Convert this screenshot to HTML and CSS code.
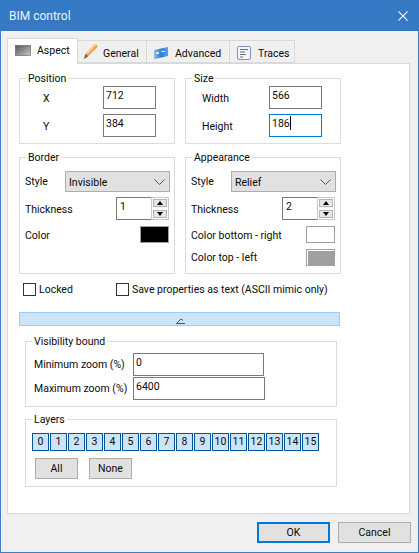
FILE: index.html
```html
<!DOCTYPE html>
<html lang="en">
<head>
<meta charset="utf-8">
<title>BIM control</title>
<link rel="stylesheet" href="styles.css">
</head>
<body>
<div class="window">
  <header class="titlebar">
    <span class="title">BIM control</span>
    <svg class="close" width="10" height="10" viewBox="0 0 10 10"><path d="M.4.4l9.200 9.200M9.600.4L.4 9.600" stroke="#fff" stroke-width="1.100" fill="none"/></svg>
  </header>
  <div class="tabs">
    <div class="tab tab-active tab-aspect">
      <svg width="16" height="12" viewBox="0 0 16 12"><defs><linearGradient id="g1" x1="0" y1="0" x2="1" y2="1"><stop offset="0" stop-color="#555"/><stop offset="1" stop-color="#c8c8c8"/></linearGradient></defs><rect x=".5" y=".5" width="15" height="10" fill="url(#g1)" stroke="#555" stroke-width=".6"/></svg>
      <span>Aspect</span>
    </div>
    <div class="tab tab-general">
      <svg width="16" height="17" viewBox="0 0 16 17"><path d="M1 16l1.500-5L11 1.500c1.500-1 3.500 .5 3.500 2.500L5.500 13z" fill="#f0a040"/><path d="M3 10.500L11 1.500c1-.7 2-.3 2.500 .3L5 11z" fill="#fbd08a"/><path d="M1 16l1.500-5 2.500 2.200z" fill="#6a5a48"/></svg>
      <span>General</span>
    </div>
    <div class="tab tab-advanced">
      <svg width="15" height="12" viewBox="0 0 15 12"><defs><linearGradient id="g2" x1="0" y1="0" x2="1" y2="0"><stop offset="0" stop-color="#8cc0ec"/><stop offset=".5" stop-color="#2f7fd0"/><stop offset="1" stop-color="#5aa0e0"/></linearGradient></defs><path d="M0 3l14-3v9L1 12H0z" fill="url(#g2)"/><path d="M2 5h3v2H2zM7 4h4v1H7z" fill="#cfe6fa"/></svg>
      <span>Advanced</span>
    </div>
    <div class="tab tab-traces">
      <svg width="14" height="14" viewBox="0 0 14 14"><rect x=".5" y=".5" width="13" height="13" rx="1.500" fill="#f2f5fb" stroke="#7f93c0"/><path d="M3 3.500h8M3 6h5M3 8.500h6M3 11h3" stroke="#6a6a78"/></svg>
      <span>Traces</span>
    </div>
  </div>
  <main class="panel">
    <div class="two-col row-top">
      <section class="group group-pos">
        <span class="legend">Position</span>
        <div class="row row-field"><span class="lbl lbl-x">X</span><div class="input input-small">712</div></div>
        <div class="row row-field"><span class="lbl lbl-x">Y</span><div class="input input-small">384</div></div>
      </section>
      <section class="group group-pos">
        <span class="legend">Size</span>
        <div class="row row-field"><span class="lbl lbl-size">Width</span><div class="input input-small">566</div></div>
        <div class="row row-field"><span class="lbl lbl-size">Height</span><div class="input input-small input-focus">186<i class="caret"></i></div></div>
      </section>
    </div>
    <div class="two-col row-mid">
      <section class="group group-style">
        <span class="legend">Border</span>
        <div class="row row-select"><span class="lbl">Style</span>
          <div class="select"><span>Invisible</span><svg width="11" height="6" viewBox="0 0 11 6"><path d="M.5.5l5 5 5-5" stroke="#555" fill="none"/></svg></div></div>
        <div class="row row-spin"><span class="lbl">Thickness</span>
          <div class="input spin"><span>1</span><div class="spin-btns"><div class="spin-btn"><i class="tri-up"></i></div><div class="spin-btn"><i class="tri-down"></i></div></div></div></div>
        <div class="row row-color"><span class="lbl">Color</span><div class="swatch swatch-black"></div></div>
      </section>
      <section class="group group-style">
        <span class="legend">Appearance</span>
        <div class="row row-select"><span class="lbl">Style</span>
          <div class="select"><span>Relief</span><svg width="11" height="6" viewBox="0 0 11 6"><path d="M.5.5l5 5 5-5" stroke="#555" fill="none"/></svg></div></div>
        <div class="row row-spin"><span class="lbl">Thickness</span>
          <div class="input spin"><span>2</span><div class="spin-btns"><div class="spin-btn"><i class="tri-up"></i></div><div class="spin-btn"><i class="tri-down"></i></div></div></div></div>
        <div class="row row-color"><span class="lbl">Color bottom - right</span><div class="swatch swatch-white"></div></div>
        <div class="row row-color2"><span class="lbl">Color top - left</span><div class="swatch swatch-gray"></div></div>
      </section>
    </div>
    <div class="checks">
      <label class="check check-locked"><i class="box"></i><span>Locked</span></label>
      <label class="check"><i class="box"></i><span>Save properties as text (ASCII mimic only)</span></label>
    </div>
    <div class="bar"><svg width="9" height="6" viewBox="0 0 9 6"><path d="M0 5.500h9M1 5L5 1l2 1.500" stroke="#444" fill="none" stroke-width=".9"/></svg></div>
    <section class="group group-vis">
      <span class="legend">Visibility bound</span>
      <div class="row row-zoom"><span class="lbl">Minimum zoom (%)</span><div class="input input-min">0</div></div>
      <div class="row row-zoom"><span class="lbl">Maximum zoom (%)</span><div class="input input-max">6400</div></div>
    </section>
    <section class="group group-layers">
      <span class="legend">Layers</span>
      <div class="layers">
        <div class="layer">0</div><div class="layer">1</div><div class="layer">2</div><div class="layer">3</div>
        <div class="layer">4</div><div class="layer">5</div><div class="layer">6</div><div class="layer">7</div>
        <div class="layer">8</div><div class="layer">9</div><div class="layer">10</div><div class="layer">11</div>
        <div class="layer">12</div><div class="layer">13</div><div class="layer">14</div><div class="layer">15</div>
      </div>
      <div class="layer-actions">
        <div class="btn btn-small">All</div>
        <div class="btn btn-small">None</div>
      </div>
    </section>
  </main>
  <footer class="footer">
    <div class="btn btn-main btn-default">OK</div>
    <div class="btn btn-main">Cancel</div>
  </footer>
</div>
</body>
</html>
```

FILE: styles.css
```css
* { box-sizing: border-box; }
html, body { margin: 0; padding: 0; }
body {
  width: 419px;
  height: 553px;
  overflow: hidden;
  font-family: Roboto, "Noto Sans", sans-serif;
  font-size: 10.5px;
  color: #0a0a0a;
}
.window {
  width: 419px;
  height: 553px;
  display: flex;
  flex-direction: column;
  background: #f0f0f0;
  border: 1px solid #3b7fc9;
  border-top: 0;
}
.titlebar {
  height: 31px;
  flex: none;
  display: flex;
  align-items: center;
  justify-content: space-between;
  padding: 0 11px 0 8px;
  margin: 0 -1px;
  background: #3579c5;
  color: #fff;
}
.title { font-size: 12px; padding-left: 1px; color: #eaf2fa; }
.tabs {
  flex: none;
  height: 33px;
  padding: 7px 0 0 6px;
  display: flex;
  align-items: flex-end;
  position: relative;
  z-index: 1;
  margin-bottom: -1px;
}
.tab {
  height: 23px;
  display: flex;
  align-items: center;
  padding-top: 3px;
  border: 1px solid #d9d9d9;
  border-left: 0;
  background: #f0f0f0;
  margin-bottom: 1px;
}
.tab-active {
  height: 26px;
  margin-bottom: 0;
  background: #fff;
  border-left: 1px solid #d9d9d9;
  border-bottom: 0;
}
.tab-aspect { width: 71px; padding: 0 0 2px 7px; gap: 6px; }
.tab-general { width: 69px; padding-left: 5px; gap: 4px; }
.tab-general svg { margin-bottom: 3px; }
.tab-advanced { width: 83px; padding-left: 7px; gap: 6px; }
.tab-traces { width: 65px; padding-left: 7px; gap: 7px; }
.tab-traces svg { margin-bottom: 1px; }
.panel {
  width: 403px;
  height: 451px;
  flex: none;
  margin-left: 6px;
  background: #fff;
  border: 1px solid #d9d9d9;
  padding: 14px 0 0 11px;
}
.two-col { display: flex; gap: 10px; }
.row-top { margin-bottom: 13px; }
.group {
  position: relative;
  border: 1px solid #dcdcdc;
}
.legend {
  position: absolute;
  top: -8px;
  left: 6px;
  padding: 0 2px;
  background: #fff;
  line-height: 16px;
}
.group-pos { width: 156px; height: 66px; padding-top: 7px; display: flex; flex-direction: column; gap: 5px; }
.group-style { width: 156px; height: 117px; padding: 13px 4px 0 5px; }
.row { display: flex; align-items: center; justify-content: space-between; }
.row-field { height: 23px; justify-content: flex-start; }
.lbl-x { width: 83px; padding-left: 23px; }
.lbl-size { width: 83px; padding-left: 16px; }
.row-field .lbl { padding-top: 1px; }
.input {
  height: 23px;
  border: 1px solid #7a7a7a;
  background: #fff;
  padding-left: 2px;
  line-height: 18px;
}
.input-small { width: 53px; }
.input-focus { border-color: #0078d7; }
.caret { display: inline-block; width: 1px; height: 14px; background: #000; vertical-align: -3px; }
.row-select { height: 21px; }
.select {
  width: 105px;
  height: 21px;
  background: #e1e1e1;
  border: 1px solid #adadad;
  display: flex;
  align-items: center;
  justify-content: space-between;
  padding: 0 4px 0 3px;
}
.select span { padding-top: 1px; }
.row-spin { height: 23px; margin-top: 5px; }
.row-spin .lbl, .row-color .lbl { padding-top: 1px; }
.spin { width: 53px; display: flex; justify-content: space-between; padding: 0 0 0 3px; margin-right: 1px; }
.spin-btns {
  width: 18px;
  display: flex;
  flex-direction: column;
  justify-content: space-between;
  padding: 1px;
  border: 1px solid #c8c8c8;
  margin: -1px -1px -1px 0;
  background: #fff;
}
.spin-btn {
  flex: none;
  height: 8px;
  background: #e6e6e6;
  border: 1px solid #b4b4b4;
  display: flex;
  align-items: center;
  justify-content: center;
}
.tri-up { border: 3.5px solid transparent; border-top: 0; border-bottom: 4px solid #000; }
.tri-down { border: 3.5px solid transparent; border-bottom: 0; border-top: 4px solid #000; }
.row-color { height: 17px; margin-top: 6px; }
.row-color2 { height: 17px; margin-top: 6px; }
.swatch { width: 29px; height: 17px; border: 1px solid #a0a0a0; margin-right: 1px; }
.swatch-black { background: #000; }
.swatch-white { background: #fff; }
.swatch-gray { background: #a0a0a0; box-shadow: inset 1px 1px 0 #fff; }
.checks { display: flex; margin-top: 9px; padding-left: 4px; height: 13px; }
.check { display: flex; align-items: center; gap: 3px; }
.check-locked { width: 93px; }
.box { width: 13px; height: 13px; border: 1px solid #333; background: #fff; display: block; flex: none; }
.bar {
  width: 321px;
  height: 14px;
  margin-top: 16px;
  background: #cce4f7;
  border: 1px solid #99cef6;
  display: flex;
  align-items: flex-end;
  justify-content: center;
  padding-bottom: 1px;
  padding-left: 1px;
}
.group-vis { width: 312px; height: 66px; margin: 15px 0 0 6px; padding: 11px 0 0 8px; }
.row-zoom { height: 23px; justify-content: flex-start; margin-bottom: 1px; }
.row-zoom .lbl { width: 99px; white-space: nowrap; }
.input-min { width: 131px; }
.input-max { width: 132px; }
.group-layers { width: 312px; height: 68px; margin: 12px 0 0 6px; padding: 13px 0 0 6px; }
.layers { display: flex; gap: 1px; }
.layer {
  width: 17px;
  height: 18px;
  background: #cce4f7;
  border: 1px solid #005499;
  text-align: center;
  line-height: 15px;
}
.layer-actions { display: flex; gap: 11px; margin: 7px 0 0 3px; }
.btn {
  height: 21px;
  background: #e1e1e1;
  border: 1px solid #adadad;
  text-align: center;
  line-height: 19px;
}
.btn-small { width: 43px; }
.footer { flex: none; display: flex; gap: 8px; justify-content: flex-end; padding: 8px 7px 0 0; }
.btn-main { width: 73px; }
.btn-default { border: 2px solid #0078d7; line-height: 17px; }
```
